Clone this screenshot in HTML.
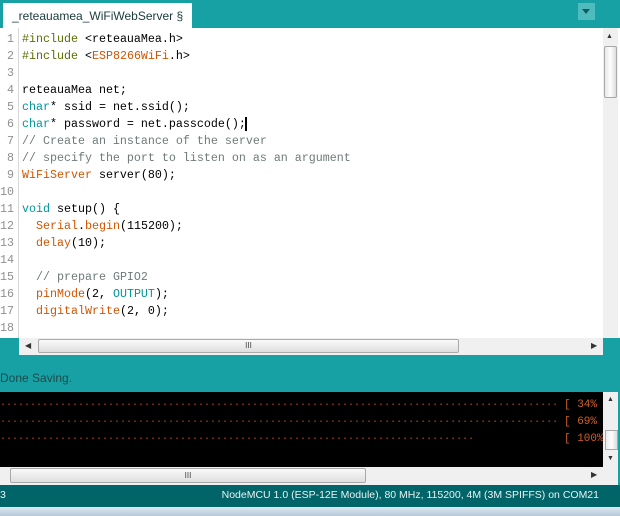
<!DOCTYPE html>
<html><head><style>
*{margin:0;padding:0;box-sizing:border-box}
body{width:620px;height:516px;overflow:hidden;background:#17a1a5;font-family:"Liberation Sans",sans-serif;position:relative}
.abs{position:absolute}
#tab{left:3px;top:3px;width:189px;height:25px;background:#fff;font-size:12px;color:#1b3b3c;padding:6px 0 0 9px}
#dd{left:578px;top:3px;width:17px;height:17px;background:#4fbbbd}
#dd:after{content:"";position:absolute;left:4px;top:6px;border-left:4.5px solid transparent;border-right:4.5px solid transparent;border-top:5px solid #0d5e62}
#ed{left:0;top:28px;width:620px;height:310px;background:#fff}
#gut{left:0;top:28px;width:19px;height:310px;border-right:1px solid #d8d8d8}
pre{position:absolute;left:22px;top:31px;font:11.67px/17px "Liberation Mono",monospace;color:#000}
.k{color:#5e6d03}.o{color:#d35400}.b{color:#00979c}.c{color:#6f7a7a}
#vs{left:603px;top:28px;width:15px;height:310px;background:#f0f0f0}
#vt{left:604px;top:46px;width:13px;height:52px;background:linear-gradient(90deg,#e8e8e8,#fdfdfd,#dcdcdc);border:1px solid #a9a9a9;border-radius:2px}
#hs{left:19px;top:338px;width:584px;height:17px;background:#f0f0f0}
#ht{left:38px;top:339px;width:421px;height:14px;background:linear-gradient(#fafafa,#dedede);border:1px solid #a9a9a9;border-radius:2px;font-size:8px;text-align:center;color:#444;line-height:12px}
#msg{left:0;top:371px;font-size:12px;color:#1e4a4b}
#con{left:0;top:392px;width:603px;height:75px;background:#000;font:10px "Liberation Mono",monospace;color:#c8471a;overflow:hidden}
#con div{position:absolute;white-space:pre}
#cvs{left:603px;top:392px;width:15px;height:75px;background:#f0f0f0}
#chs{left:0;top:467px;width:618px;height:18px;background:#f0f0f0}
#cht{left:10px;top:468px;width:356px;height:15px;background:linear-gradient(#fafafa,#dedede);border:1px solid #a9a9a9;border-radius:2px;font-size:8px;text-align:center;color:#444;line-height:13px}
#st{left:0;top:485px;width:620px;height:22px;background:#006468;color:#e8f4f4;font-size:10.5px}
#bot{left:0;top:507px;width:620px;height:9px;background:linear-gradient(#dce8f2,#b8c8d8)}
.p{position:absolute;font:11px "Liberation Mono",monospace;color:#d3602a;white-space:nowrap}
</style></head><body>
<div class="abs" id="tab">_reteauamea_WiFiWebServer §</div>
<div class="abs" id="dd"></div>
<div class="abs" id="ed"></div>
<div class="abs" id="gut"></div>
<div class="abs" style="left:0;top:31px;width:14px;font:11.67px/17px 'Liberation Mono',monospace;color:#909090;text-align:right">1<br>2<br>3<br>4<br>5<br>6<br>7<br>8<br>9<br>10<br>11<br>12<br>13<br>14<br>15<br>16<br>17<br>18</div>
<pre><span class="k">#include</span> &lt;reteauaMea.h&gt;
<span class="k">#include</span> &lt;<span class="o">ESP8266WiFi</span>.h&gt;

reteauaMea net;
<span class="b">char</span>* ssid = net.ssid();
<span class="b">char</span>* password = net.passcode();<span style="border-left:2px solid #000;margin-left:-1px"></span>
<span class="c">// Create an instance of the server</span>
<span class="c">// specify the port to listen on as an argument</span>
<span class="o">WiFiServer</span> server(80);

<span class="b">void</span> setup() {
  <span class="o">Serial</span>.<span class="o">begin</span>(115200);
  <span class="o">delay</span>(10);

  <span class="c">// prepare GPIO2</span>
  <span class="o">pinMode</span>(2, <span class="b">OUTPUT</span>);
  <span class="o">digitalWrite</span>(2, 0);
</pre>
<div class="abs" id="vs"></div>
<div class="abs" style="left:606px;top:33px;font-size:7px;color:#333">▲</div>
<div class="abs" id="vt"></div>
<div class="abs" id="hs"></div>
<div class="abs" style="left:25px;top:341px;font-size:8px;color:#333">◀</div>
<div class="abs" style="left:591px;top:341px;font-size:8px;color:#333">▶</div>
<div class="abs" id="ht">III</div>
<div class="abs" id="msg">Done Saving.</div>
<div class="abs" id="con">
<div style="left:0;top:6px">.............................................................................................</div>
<div style="left:0;top:23px">.............................................................................................</div>
<div style="left:0;top:40px">...............................................................................</div>
<span class="p" style="left:564px;top:7px">[ 34%</span>
<span class="p" style="left:564px;top:24px">[ 69%</span>
<span class="p" style="left:564px;top:41px">[ 100%</span>
</div>
<div class="abs" id="cvs"></div>
<div class="abs" style="left:607px;top:396px;font-size:7px;color:#333">▲</div>
<div class="abs" style="left:607px;top:455px;font-size:7px;color:#333">▼</div>
<div class="abs" style="left:605px;top:430px;width:13px;height:20px;background:linear-gradient(90deg,#e8e8e8,#fdfdfd,#dcdcdc);border:1px solid #a9a9a9"></div>
<div class="abs" id="chs"></div>
<div class="abs" id="cht">III</div>
<div class="abs" style="left:591px;top:470px;font-size:8px;color:#333">▶</div>
<div class="abs" id="st"><span style="position:absolute;left:0;top:4px">3</span><span style="position:absolute;right:21px;top:4px">NodeMCU 1.0 (ESP-12E Module), 80 MHz, 115200, 4M (3M SPIFFS) on COM21</span></div>
<div class="abs" id="bot"></div>
</body></html>
